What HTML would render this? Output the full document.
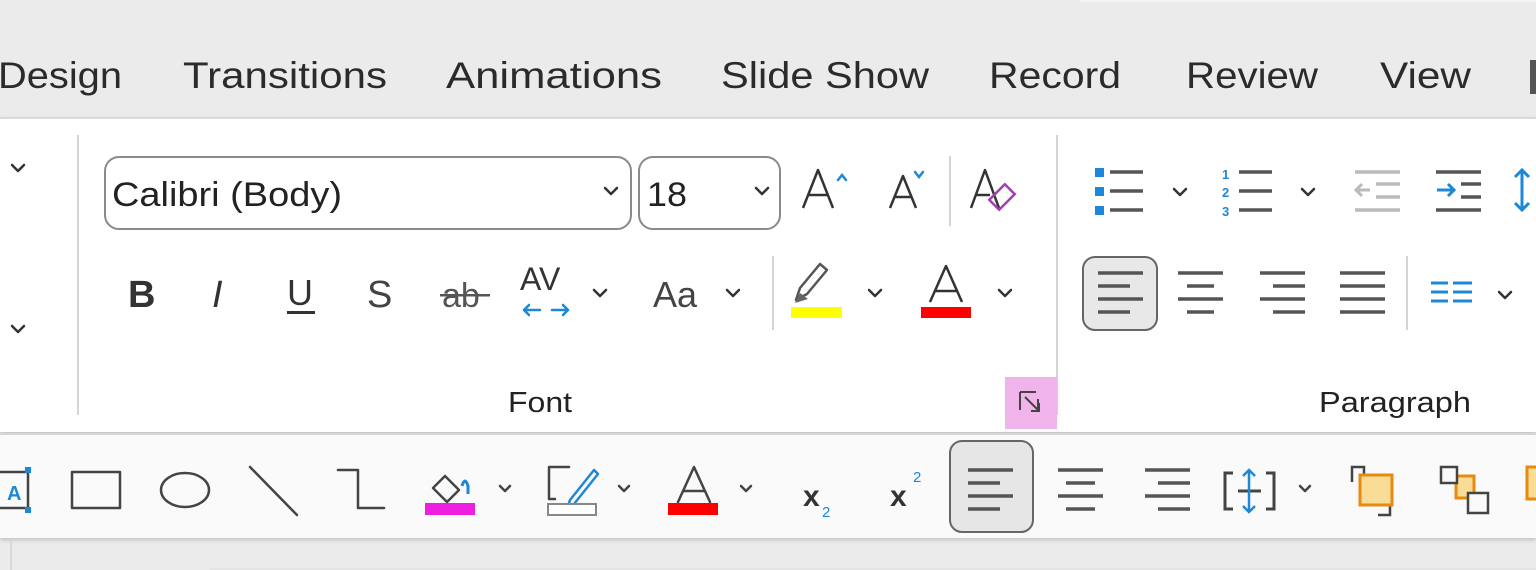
<!DOCTYPE html>
<html><head><meta charset="utf-8"><style>
html,body{margin:0;padding:0;width:1536px;height:570px;overflow:hidden;background:#ebebeb}
svg{display:block}
text{font-family:"Liberation Sans",sans-serif}
</style></head><body>
<svg width="1536" height="570" viewBox="0 0 1536 570" xmlns="http://www.w3.org/2000/svg">
<defs>
<filter id="sh" x="-5%" y="-20%" width="110%" height="140%"><feDropShadow dx="0" dy="2" stdDeviation="2" flood-color="#000" flood-opacity="0.18"/></filter>
</defs>
<rect x="0" y="0" width="1536" height="570" fill="#ebebeb"/>
<rect x="1080" y="0" width="456" height="2" fill="#f4f4f4"/>
<!-- tabs -->
<g fill="#2b2b2b" font-size="37">
<text x="-2" y="88" textLength="124" lengthAdjust="spacingAndGlyphs">Design</text>
<text x="183" y="88" textLength="204" lengthAdjust="spacingAndGlyphs">Transitions</text>
<text x="446" y="88" textLength="216" lengthAdjust="spacingAndGlyphs">Animations</text>
<text x="721" y="88" textLength="208" lengthAdjust="spacingAndGlyphs">Slide Show</text>
<text x="989" y="88" textLength="132" lengthAdjust="spacingAndGlyphs">Record</text>
<text x="1186" y="88" textLength="132" lengthAdjust="spacingAndGlyphs">Review</text>
<text x="1380" y="88" textLength="91" lengthAdjust="spacingAndGlyphs">View</text>
</g>
<rect x="1530" y="60" width="6" height="34" fill="#555"/>
<!-- ribbon -->
<rect x="0" y="118" width="1536" height="314" fill="#ffffff" filter="url(#sh)"/>
<rect x="0" y="117" width="1536" height="2" fill="#d8d8d8"/>
<rect x="77" y="135" width="2" height="280" fill="#d4d4d4"/>
<rect x="1056" y="135" width="2" height="280" fill="#d4d4d4"/>
<g fill="none" stroke="#333" stroke-width="2.5" stroke-linecap="round" stroke-linejoin="round">
<path d="M12 165 l6 6 l6 -6"/><path d="M12 326 l6 6 l6 -6"/>
</g>
<!-- font boxes -->
<rect x="105" y="157" width="526" height="72" rx="14" fill="#fff" stroke="#8a8a8a" stroke-width="2"/>
<rect x="639" y="157" width="141" height="72" rx="14" fill="#fff" stroke="#8a8a8a" stroke-width="2"/>
<text x="112" y="206" font-size="34" fill="#222" textLength="230" lengthAdjust="spacingAndGlyphs">Calibri (Body)</text>
<text x="647" y="206" font-size="34" fill="#222" textLength="40" lengthAdjust="spacingAndGlyphs">18</text>
<g fill="none" stroke="#333" stroke-width="2.5" stroke-linecap="round" stroke-linejoin="round">
<path d="M605 188 l6 6 l6 -6"/><path d="M756 188 l6 6 l6 -6"/>
</g>
<!-- grow/shrink -->
<g fill="none" stroke="#333" stroke-width="2.5" stroke-linejoin="round">
<path d="M803 208 L818 170 L833 208 M808 195 h20"/>
<path d="M890 208 L903 176 L916 208 M894 197 h18"/>
<path d="M971 208 L985 170 L999 208 M976 195 h14"/>
</g>
<g fill="none" stroke="#1e88d8" stroke-width="2.5" stroke-linecap="round"><path d="M838 180 l4 -5 l4 5"/><path d="M915 172 l4 5 l4 -5"/></g>
<rect x="949" y="156" width="2" height="70" fill="#d4d4d4"/>
<rect x="991" y="190" width="22" height="14" fill="none" stroke="#a040b0" stroke-width="2.5" transform="rotate(-45 1002 197)"/>
<!-- row 2 -->
<text x="128" y="307" font-size="38" font-weight="bold" fill="#333">B</text>
<text x="212" y="307" font-size="38" font-style="italic" fill="#333" font-family="Liberation Serif">I</text>
<text x="287" y="305" font-size="36" fill="#333">U</text>
<rect x="287" y="311" width="28" height="3" fill="#333"/>
<text x="367" y="307" font-size="38" fill="#444">S</text>
<text x="442" y="307" font-size="34" fill="#555">ab</text>
<rect x="440" y="294" width="50" height="2.5" fill="#555"/>
<text x="520" y="290" font-size="32" fill="#333">AV</text>
<g fill="none" stroke="#1e88d8" stroke-width="2.5" stroke-linecap="round" stroke-linejoin="round"><path d="M524 310 h16 M529 305 l-5 5 l5 5 M552 310 h16 M563 305 l5 5 l-5 5"/></g>
<text x="653" y="307" font-size="36" fill="#444">Aa</text>
<g fill="none" stroke="#333" stroke-width="2.5" stroke-linecap="round" stroke-linejoin="round">
<path d="M594 290 l6 6 l6 -6"/><path d="M727 290 l6 6 l6 -6"/><path d="M869 290 l6 6 l6 -6"/><path d="M999 290 l6 6 l6 -6"/>
</g>
<rect x="772" y="256" width="2" height="74" fill="#d4d4d4"/>
<path d="M796 300 l4 -12 l20 -24 l7 6 l-20 24 z" fill="none" stroke="#555" stroke-width="2.5" stroke-linejoin="round"/>
<path d="M795 303 l5 -10 l8 6z" fill="#666"/>
<rect x="791" y="307" width="51" height="11" fill="#ffff00"/>
<path d="M930 302 L946 266 L962 302 M935 291 h22" fill="none" stroke="#333" stroke-width="2.5" stroke-linejoin="round"/>
<rect x="921" y="307" width="50" height="11" fill="#ff0000"/>
<text x="540" y="412" font-size="29" fill="#222" text-anchor="middle" textLength="64" lengthAdjust="spacingAndGlyphs">Font</text>
<rect x="1005" y="377" width="52" height="52" fill="#f0b4ea"/>
<path d="M1020 392 v18 M1020 392 h16 M1025 397 l14 14 M1031 411 h8 v-8 M1038 399 v12" fill="none" stroke="#444" stroke-width="2"/>
<!-- paragraph row1 -->
<g fill="#1e88d8"><rect x="1095" y="168" width="9" height="9"/><rect x="1095" y="187" width="9" height="9"/><rect x="1095" y="206" width="9" height="9"/></g>
<g stroke="#555" stroke-width="3.5"><path d="M1110 172h33 M1110 191h33 M1110 210h33"/>
<path d="M1239 172h33 M1239 191h33 M1239 210h33"/>
<path d="M1436 172h45 M1461 184h20 M1461 197h20 M1436 210h45"/></g>
<text x="1222" y="179" font-size="13" font-weight="bold" fill="#1e88d8">1</text>
<text x="1222" y="197" font-size="13" font-weight="bold" fill="#1e88d8">2</text>
<text x="1222" y="216" font-size="13" font-weight="bold" fill="#1e88d8">3</text>
<g stroke="#bbb" stroke-width="3.5"><path d="M1355 172h45 M1376 184h24 M1376 197h24 M1355 210h45"/></g>
<path d="M1370 190 h-14 M1362 184 l-6 6 l6 6" fill="none" stroke="#bbb" stroke-width="3"/>
<path d="M1437 190 h16 M1448 184 l6 6 l-6 6" fill="none" stroke="#1e88d8" stroke-width="3"/>
<path d="M1522 170 v40 M1515 177 l7 -7 l7 7 M1515 203 l7 7 l7 -7" fill="none" stroke="#1e88d8" stroke-width="3"/>
<g fill="none" stroke="#333" stroke-width="2.5" stroke-linecap="round" stroke-linejoin="round">
<path d="M1174 189 l6 6 l6 -6"/><path d="M1302 189 l6 6 l6 -6"/><path d="M1499 292 l6 6 l6 -6"/>
</g>
<!-- align row -->
<rect x="1083" y="257" width="74" height="73" rx="12" fill="#e8e8e8" stroke="#666" stroke-width="2"/>
<g stroke="#555" stroke-width="3.5">
<path d="M1098 273h45 M1098 286h32 M1098 299h45 M1098 312h32"/>
<path d="M1178 273h45 M1187 286h27 M1178 299h45 M1187 312h27"/>
<path d="M1260 273h45 M1273 286h32 M1260 299h45 M1273 312h32"/>
<path d="M1340 273h45 M1340 286h45 M1340 299h45 M1340 312h45"/>
</g>
<rect x="1406" y="256" width="2" height="74" fill="#d4d4d4"/>
<g stroke="#1e88d8" stroke-width="3"><path d="M1431 283h17 M1453 283h19 M1431 292h17 M1453 292h19 M1431 301h17 M1453 301h19"/></g>
<text x="1395" y="412" font-size="29" fill="#222" text-anchor="middle" textLength="152" lengthAdjust="spacingAndGlyphs">Paragraph</text>
<!-- bottom toolbar -->
<rect x="0" y="434" width="1536" height="104" fill="#fafafa" filter="url(#sh)"/>
<rect x="0" y="433" width="1536" height="2" fill="#d6d6d6"/>
<rect x="10" y="540" width="2" height="30" fill="#d8d8d8"/>
<rect x="210" y="568" width="1326" height="2" fill="#e4e4e4"/>
<g fill="none" stroke="#444" stroke-width="2.5" stroke-linecap="round" stroke-linejoin="round">
<path d="M0 472 h28 v36 h-28"/>
<rect x="72" y="472" width="48" height="36"/>
<ellipse cx="185" cy="490" rx="24" ry="17"/>
<path d="M250 467 L297 515"/>
<path d="M338 470 h20 v38 h26"/>
<path d="M433 488 l12 -12 l14 14 l-12 12 z" />
<path d="M569 467 h-20 v32 h6" />
<path d="M500 486 l5 5 l5 -5"/><path d="M619 486 l5 5 l5 -5"/><path d="M741 486 l5 5 l5 -5"/><path d="M1300 486 l5 5 l5 -5"/>
<path d="M678 502 L694 467 L710 502 M683 491 h22"/>
</g>
<text x="7" y="500" font-size="20" font-weight="bold" fill="#1e88d8">A</text>
<rect x="25" y="467" width="6" height="6" fill="#1e88d8"/><rect x="25" y="507" width="6" height="6" fill="#1e88d8"/>
<path d="M462 486 q3 -10 6 0 v8" fill="none" stroke="#1e88d8" stroke-width="3"/>
<rect x="425" y="503" width="50" height="12" fill="#ee1ee0"/>
<path d="M570 500 l24 -30 l4 4 l-24 30 l-6 2z" fill="none" stroke="#1e88d8" stroke-width="2.5" stroke-linejoin="round"/>
<rect x="548" y="504" width="48" height="11" fill="#fff" stroke="#888" stroke-width="2"/>
<rect x="668" y="503" width="50" height="12" fill="#ff0000"/>
<text x="803" y="506" font-size="30" font-weight="bold" fill="#333">x</text>
<text x="822" y="517" font-size="15" fill="#1e88d8">2</text>
<text x="890" y="506" font-size="30" font-weight="bold" fill="#333">x</text>
<text x="913" y="482" font-size="15" fill="#1e88d8">2</text>
<rect x="950" y="441" width="83" height="91" rx="12" fill="#e6e6e6" stroke="#666" stroke-width="2"/>
<g stroke="#555" stroke-width="3.5">
<path d="M968 470h45 M968 483h32 M968 496h45 M968 509h32"/>
<path d="M1058 470h45 M1066 483h29 M1058 496h45 M1066 509h29"/>
<path d="M1145 470h45 M1158 483h32 M1145 496h45 M1158 509h32"/>
</g>
<path d="M1233 473 h-8 v36 h8 M1266 473 h8 v36 h-8 M1238 491 h23" fill="none" stroke="#444" stroke-width="3"/>
<path d="M1249 470 v42 M1243 476 l6 -6 l6 6 M1243 506 l6 6 l6 -6" fill="none" stroke="#1e88d8" stroke-width="2.5"/>
<path d="M1364 482 v-15 h-12 v15 M1390 498 v17 h-12" fill="none" stroke="#444" stroke-width="2.5"/>
<rect x="1360" y="475" width="32" height="30" fill="#f9dc96" stroke="#e88a10" stroke-width="3"/>
<rect x="1456" y="476" width="18" height="22" fill="#f9dc96" stroke="#e88a10" stroke-width="3"/>
<rect x="1441" y="467" width="16" height="16" fill="#fafafa" stroke="#444" stroke-width="2.5"/>
<rect x="1468" y="493" width="20" height="20" fill="#fafafa" stroke="#444" stroke-width="2.5"/>
<rect x="1527" y="467" width="12" height="32" fill="#f9dc96" stroke="#e88a10" stroke-width="3"/>
</svg>
</body></html>
